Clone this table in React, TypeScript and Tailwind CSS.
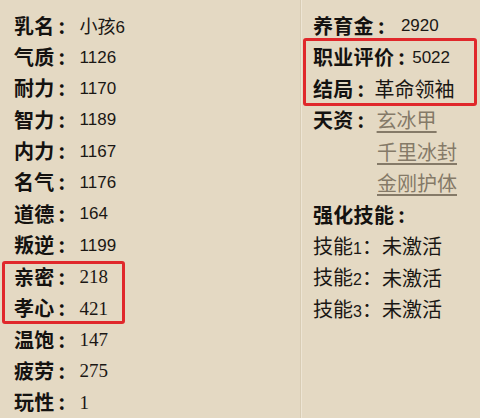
import React from "react";

const CJK = "font-['Noto_Sans_CJK_SC',sans-serif]";

function Label({ text }: { text: string }) {
  return (
    <span className={`${CJK} text-[20px] font-bold leading-none text-[#141210] tracking-[0.3px]`}>{text}</span>
  );
}

function Colon({ w }: { w: string }) {
  return (
    <span className={`${w} inline-flex items-center pl-[4px] ${CJK} text-[20px] font-bold leading-none text-[#141210]`}>:</span>
  );
}

function Num({ v, serif }: { v: string; serif?: boolean }) {
  return (
    <span
      className={`${serif ? "font-['Liberation_Serif',serif] text-[19px]" : "font-['Liberation_Sans',sans-serif] text-[17px]"} leading-none text-[#1a1714]`}
    >
      {v}
    </span>
  );
}

function Cn({ v }: { v: string }) {
  return <span className={`${CJK} text-[20px] font-normal leading-none text-[#1a1714]`}>{v}</span>;
}

function Link({ v }: { v: string }) {
  return (
    <span className={`${CJK} text-[20px] font-normal leading-none text-[#857a68] underline decoration-[#857a68] underline-offset-[3px]`}>
      {v}
    </span>
  );
}

const left: { l: string; v: string; serif?: boolean; cn?: boolean }[] = [
  { l: "乳名", v: "小孩6", cn: true },
  { l: "气质", v: "1126" },
  { l: "耐力", v: "1170" },
  { l: "智力", v: "1189" },
  { l: "内力", v: "1167" },
  { l: "名气", v: "1176" },
  { l: "道德", v: "164" },
  { l: "叛逆", v: "1199" },
];
const left2 = [
  { l: "亲密", v: "218" },
  { l: "孝心", v: "421" },
];
const left3 = [
  { l: "温饱", v: "147" },
  { l: "疲劳", v: "275" },
  { l: "玩性", v: "1" },
];

function LeftRow({ l, children }: { l: string; children: React.ReactNode }) {
  return (
    <div className="h-[31.5px] flex items-center">
      <Label text={l} />
      <Colon w="w-[25px]" />
      {children}
    </div>
  );
}

function RightRow({ children }: { children: React.ReactNode }) {
  return <div className="h-[31.5px] flex items-center">{children}</div>;
}

export default function App() {
  return (
    <div className="w-[480px] h-[418px] bg-[#e4d9c3] flex overflow-hidden">
      <div className="w-[300px] pl-[14px] pt-[10px] flex flex-col">
        {left.map((r) => (
          <LeftRow key={r.l} l={r.l}>
            {r.cn ? (
              <span className={`${CJK} text-[18px] leading-none text-[#1a1714]`}>
                小孩<span className="font-['Liberation_Sans',sans-serif] text-[17px]">6</span>
              </span>
            ) : (
              <Num v={r.v} />
            )}
          </LeftRow>
        ))}
        <div className="relative">
          {left2.map((r) => (
            <LeftRow key={r.l} l={r.l}>
              <Num v={r.v} serif />
            </LeftRow>
          ))}
          <div className="absolute top-0 bottom-0 left-[-12px] w-[123px] border-[3px] border-[#e0282b] rounded-[3px]" />
        </div>
        {left3.map((r) => (
          <LeftRow key={r.l} l={r.l}>
            <Num v={r.v} serif />
          </LeftRow>
        ))}
      </div>
      <div className="w-px bg-[#d8ccb4]" />
      <div className="w-px bg-[#ede5d4]" />
      <div className="flex-1 pl-[11px] pt-[10px] flex flex-col">
        <RightRow>
          <Label text="养育金" />
          <Colon w="w-[27px]" />
          <Num v="2920" />
        </RightRow>
        <div className="relative">
          <RightRow>
            <Label text="职业评价" />
            <Colon w="w-[18px]" />
            <Num v="5022" />
          </RightRow>
          <RightRow>
            <Label text="结局" />
            <Colon w="w-[21px]" />
            <Cn v="革命领袖" />
          </RightRow>
          <div className="absolute top-[-4px] bottom-[-1px] left-[-10px] w-[174px] border-[3px] border-[#e0282b] rounded-[3px]" />
        </div>
        <RightRow>
          <Label text="天资" />
          <Colon w="w-[23px]" />
          <Link v="玄冰甲" />
        </RightRow>
        <RightRow>
          <span className="w-[64px]" />
          <Link v="千里冰封" />
        </RightRow>
        <RightRow>
          <span className="w-[64px]" />
          <Link v="金刚护体" />
        </RightRow>
        <RightRow>
          <Label text="强化技能" />
          <Colon w="w-[18px]" />
        </RightRow>
        {["1", "2", "3"].map((n) => (
          <RightRow key={n}>
            <span className={`${CJK} text-[20px] leading-none text-[#1a1714]`}>
              技能<span className="font-['Liberation_Sans',sans-serif] text-[16px]">{n}</span>：
            </span>
            <span className="w-[0px]" />
            <Cn v="未激活" />
          </RightRow>
        ))}
      </div>
    </div>
  );
}
